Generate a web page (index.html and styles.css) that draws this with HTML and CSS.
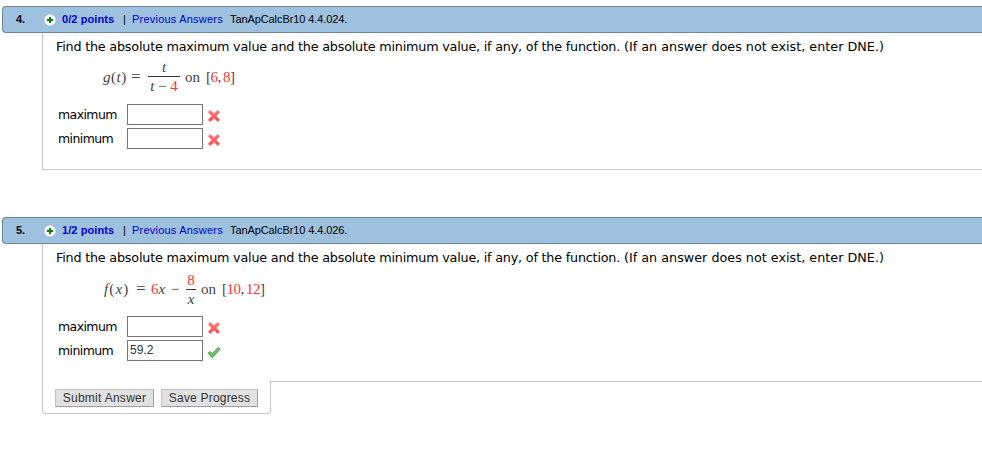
FILE: index.html
```html
<!DOCTYPE html>
<html lang="en">
<head>
<meta charset="utf-8">
<title>Assignment</title>
<link rel="stylesheet" href="styles.css">
</head>
<body>
<svg width="0" height="0" class="defs">
  <defs>
    <linearGradient id="red" x1="0" y1="0" x2="0" y2="1"><stop offset="0" stop-color="#f98080"/><stop offset="1" stop-color="#ef4a4a"/></linearGradient>
    <symbol id="wrong" viewBox="0 0 14 14"><path d="M1.2 3.2 3.2 1.2 7 4.6 10.8 1.2 12.8 3.2 9.4 7 12.8 10.8 10.8 12.8 7 9.4 3.2 12.8 1.2 10.8 4.6 7Z" fill="url(#red)" stroke="#f58b8b" stroke-width=".7" stroke-linejoin="round"/></symbol>
    <symbol id="right" viewBox="0 0 14 14"><path d="M.9 8.2 3 6.4 5.2 8.4 11.4 2.3 13.3 4.1 5.8 12.2H4.6Z" fill="#6fc06b" stroke="#4d9f50" stroke-width=".9" stroke-linejoin="round"/></symbol>
    <symbol id="plus" viewBox="0 0 12 12"><circle cx="6" cy="6" r="5.6" fill="#fff" stroke="#d5d5d0" stroke-width=".7"/><path d="M6 3V9M3 6H9" stroke="#078207" stroke-width="2"/></symbol>
  </defs>
</svg>
<section class="question">
  <header class="bar"><b class="num">4.</b><svg class="plus"><use href="#plus"/></svg><a class="points">0/2 points</a><span class="sep">|</span><a class="prev">Previous Answers</a><span class="code">TanApCalcBr10 4.4.024.</span></header>
  <div class="body">
    <p class="prompt">Find the absolute maximum value and the absolute minimum value, if any, of the function. <span class="note">(If an answer does not exist, enter DNE.)</span></p>
    <div class="formula first">
      <span class="fn"><i>g</i>(<i>t</i>)</span><span class="eq">=</span>
      <span class="frac wide"><span><i>t</i></span><span class="den"><i>t</i> − <em>4</em></span></span>
      <span class="on">on</span><span class="range">[<em>6</em>, <em>8</em>]</span>
    </div>
    <div class="row"><label for="a">maximum</label><input id="a"><svg class="mark"><use href="#wrong"/></svg></div>
    <div class="row"><label for="b">minimum</label><input id="b"><svg class="mark"><use href="#wrong"/></svg></div>
  </div>
</section>
<section class="question">
  <header class="bar"><b class="num">5.</b><svg class="plus"><use href="#plus"/></svg><a class="points">1/2 points</a><span class="sep">|</span><a class="prev">Previous Answers</a><span class="code">TanApCalcBr10 4.4.026.</span></header>
  <div class="body open">
    <p class="prompt">Find the absolute maximum value and the absolute minimum value, if any, of the function. <span class="note">(If an answer does not exist, enter DNE.)</span></p>
    <div class="formula second">
      <span class="fn"><i>f</i>(<i>x</i>)</span><span class="eq">=</span>
      <span class="term"><em>6</em><i>x</i></span><span class="minus">−</span>
      <span class="frac narrow"><span><em>8</em></span><span class="den"><i>x</i></span></span>
      <span class="on">on</span><span class="range">[<em>10</em>, <em>12</em>]</span>
    </div>
    <div class="row"><label for="c">maximum</label><input id="c"><svg class="mark"><use href="#wrong"/></svg></div>
    <div class="row"><label for="d">minimum</label><input id="d" value="59.2"><svg class="mark"><use href="#right"/></svg></div>
  </div>
  <div class="footer">
    <div class="actions"><button class="submit">Submit Answer</button><button class="save">Save Progress</button></div>
    <div class="rule"></div>
  </div>
</section>
</body>
</html>
```
FILE: styles.css
```css
* { box-sizing: border-box; }
body {
  margin: 0;
  padding-top: 6px;
  height: 460px;
  overflow: hidden;
  background: #fff;
  color: #000;
  font: 12.75px "DejaVu Sans", Verdana, sans-serif;
}
.defs { display: block; }
.question { margin-bottom: 47px; }
.bar {
  display: flex;
  align-items: center;
  height: 27px;
  margin-left: 2px;
  border: 1px solid #6a8699;
  border-right: 0;
  border-radius: 4px 0 0 4px;
  background: #9dc1de;
  font: 11px/25px "Liberation Sans", Arial, sans-serif;
  white-space: nowrap;
}
.num { width: 28px; margin-left: 13px; }
.plus { flex: none; width: 12px; height: 12px; }
.bar a { color: #0000c8; }
.points { width: 61px; margin-left: 6px; font-weight: bold; letter-spacing: .09px; }
.sep { width: 9px; }
.prev { width: 98px; letter-spacing: .22px; }
.code { letter-spacing: -.09px; }
.body {
  height: 137px;
  margin-left: 42px;
  padding: 5px 0 0 13px;
  border-left: 1px solid #c8c8c8;
  border-bottom: 1px solid #c8c8c8;
}
.body.open { height: 137px; border-bottom: 0; }
.prompt { margin: 0; line-height: 18px; white-space: nowrap; letter-spacing: -.2px; }
.note { letter-spacing: .01px; }
.formula {
  display: flex;
  align-items: center;
  height: 47px;
  padding-bottom: 6px;
  color: #444;
  font: 15px/16px "Liberation Serif", "Times New Roman", serif;
  white-space: nowrap;
}
.formula.second { height: 48px; padding-bottom: 4px; }
.formula em { color: #f33; font-style: normal; }
.first { padding-left: 47px; }
.second { padding-left: 48px; }
.fn { width: 28px; letter-spacing: .5px; }
.second .fn { width: 32px; letter-spacing: 1.1px; }
.eq { width: 17px; font-size: 17px; }
.second .eq { width: 15px; }
.term { width: 20px; }
.minus { width: 15px; }
.frac { display: flex; flex-direction: column; align-items: center; line-height: 18px; }
.frac .den { width: 100%; border-top: 1px solid #333; text-align: center; }
.wide { width: 32px; }
.narrow { width: 10px; }
.on { width: 21px; margin-left: 5px; }
.range { letter-spacing: -.5px; word-spacing: -1px; }
.row { display: flex; align-items: center; height: 24px; }
.row label { width: 69px; padding: 0 0 2px 2px; font-size: 12.5px; letter-spacing: -.6px; }
.row input, .row label { flex: none; }
.row input {
  width: 76px;
  height: 21px;
  margin: 0 0 2px 2px;
  padding: 0 2px;
  border: 1px solid #767676;
  border-radius: 0;
  color: #333;
  font: 12px "Liberation Sans", Arial, sans-serif;
}
.mark { width: 14px; height: 14px; margin: 1px 0 0 4px; }
.footer { display: flex; }
.actions {
  display: flex;
  gap: 7px;
  width: 229px;
  height: 33px;
  margin-left: 42px;
  padding: 8px 0 0 12px;
  border: 1px solid #c8c8c8;
  border-top: 0;
  border-radius: 0 0 4px 4px;
}
.rule { flex: 1; border-top: 1px solid #c8c8c8; }
button {
  height: 18px;
  padding: 0;
  border: 1px solid #c2c2c2;
  border-right-color: #a0a0a0;
  border-bottom-color: #a0a0a0;
  background: #e1e1e1;
  color: #333;
  font: 12px/15px "Liberation Sans", Arial, sans-serif;
}
.submit { width: 99px; letter-spacing: .28px; }
.save { width: 97px; letter-spacing: .2px; }
```
